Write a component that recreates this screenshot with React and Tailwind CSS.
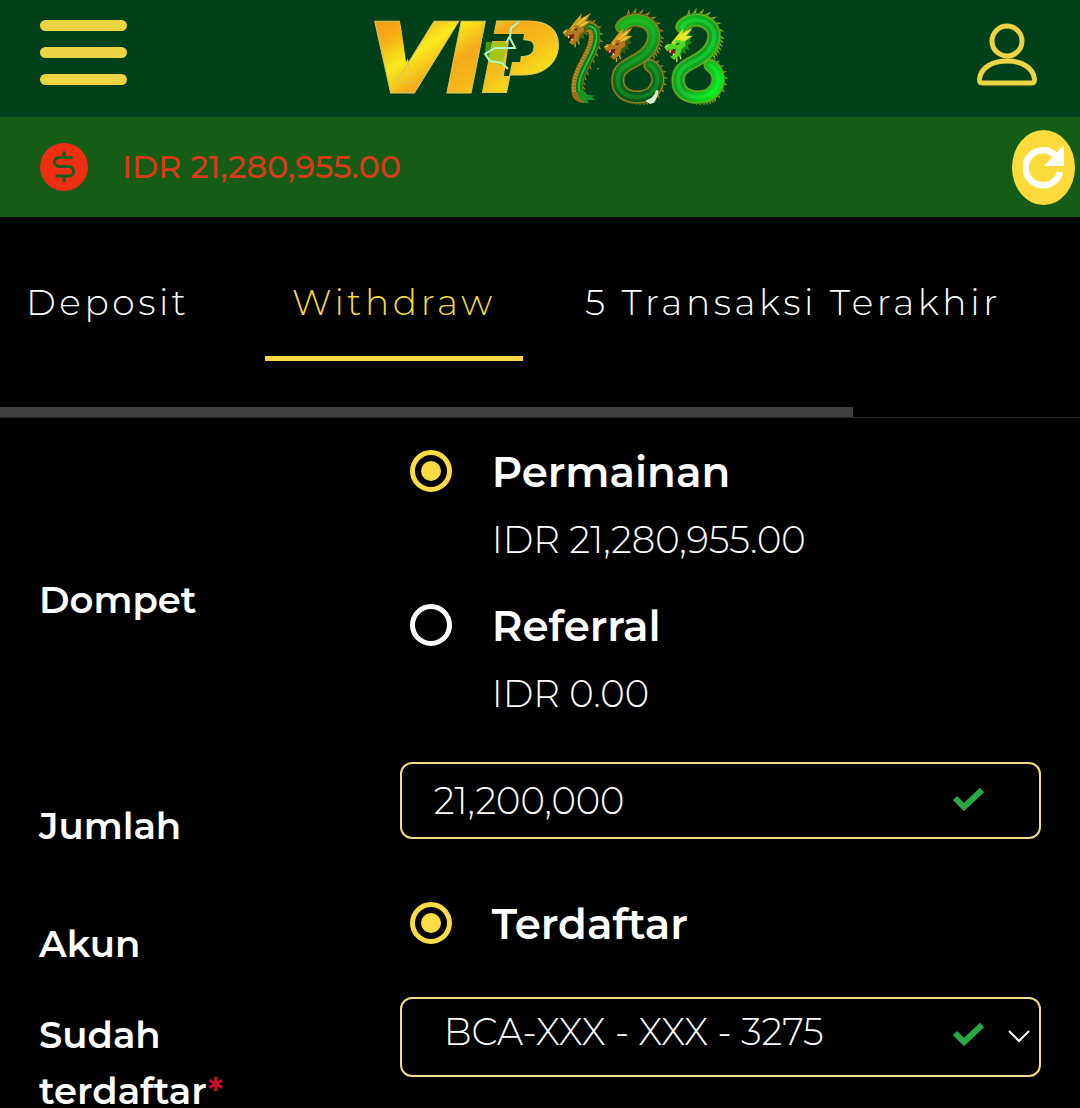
import React, { useState } from "react";

const TOP_CURVE = [
  [232, 64, 258, 46, 302, 58, 311, 100],
  [311, 100, 313, 122, 306, 140, 296, 152],
];
const BOTTOM_CURVE = [
  [262, 286, 285, 290, 298, 284, 305, 278],
  [305, 278, 335, 250, 325, 212, 300, 196],
];
const EIGHT_PATH =
  "M215 80C235 50 300 52 311 100C316 145 280 170 250 185C215 203 200 215 204 250C210 298 280 300 305 278C335 250 325 212 300 196";

const ONE_CURVE = [
  [96, 82, 142, 66, 140, 118, 120, 160],
  [120, 160, 98, 205, 72, 240, 84, 284],
];
const ONE_PATH = "M96 82C142 66 140 118 120 160C98 205 72 240 84 284";

// row of spines that follows one side of a curve, lean > 0 points them to the tail
const spines = (curve, side, reach, lean) => {
  let d = "";
  curve.forEach(([x0, y0, x1, y1, x2, y2, x3, y3]) => {
    for (let i = 0; i < 7; i++) {
      const t = (i + 0.5) / 7;
      const u = 1 - t;
      const x = u * u * u * x0 + 3 * u * u * t * x1 + 3 * u * t * t * x2 + t * t * t * x3;
      const y = u * u * u * y0 + 3 * u * u * t * y1 + 3 * u * t * t * y2 + t * t * t * y3;
      const dx = u * u * (x1 - x0) + 2 * u * t * (x2 - x1) + t * t * (x3 - x2);
      const dy = u * u * (y1 - y0) + 2 * u * t * (y2 - y1) + t * t * (y3 - y2);
      const len = Math.hypot(dx, dy) || 1;
      const tx = dx / len;
      const ty = dy / len;
      const nx = ty * side;
      const ny = -tx * side;
      d += `M${x + nx * 10 - tx * 8} ${y + ny * 10 - ty * 8}`;
      d += `L${x + nx * reach + tx * lean} ${y + ny * reach + ty * lean}`;
      d += `L${x + nx * 10 + tx * 8} ${y + ny * 10 + ty * 8}Z`;
    }
  });
  return d;
};

const DragonHead = ({ x, y, horn, face, dark }) => (
  <g transform={`translate(${x} ${y})`}>
    <path
      d="M62 -2L74 -24L70 -6L82 -30L76 -4L88 -10L76 10L84 16L70 24L76 38L62 34L66 50L54 44L50 58L42 40L20 30Z"
      fill={dark}
    />
    <path d="M20 18L40 -8L58 -28L54 -12L86 -30L66 -4L84 -4L54 18L36 26Z" fill={horn} />
    <path d="M0 30L8 20L24 20L36 8L62 10L64 26L50 36L34 34L20 38L8 42Z" fill={face} />
    <path d="M34 34L52 34L46 54L30 68L18 58L28 52Z" fill={face} />
    <path d="M10 40L34 35L32 48L22 56L24 46L14 48Z" fill="#7a1d0b" />
    <path d="M14 40L18 48L21 39ZM24 55L28 46L31 52Z" fill="#f6efc0" />
    <path d="M34 20L46 17L40 24Z" fill="#12300c" />
    <path d="M2 29L12 26M26 24L34 14M44 6L70 -16M50 12L74 -2" stroke="#f7e36a" strokeWidth="3" fill="none" />
    <path d="M38 62L37 74M46 54L50 66" stroke={horn} strokeWidth="4" />
  </g>
);

const EightDragon = ({ x, edge, body, shine, horn, face, dark }) => (
  <g transform={`translate(${x} 0)`}>
    <path d={spines(TOP_CURVE, 1, 32, 14)} fill={edge} />
    <path d={spines(BOTTOM_CURVE, -1, 30, -6)} fill={edge} />
    <g fill="none" strokeLinecap="round">
      <path d={EIGHT_PATH} stroke={dark} strokeWidth="42" />
      <path d={EIGHT_PATH} stroke={edge} strokeWidth="38" />
      <path d={EIGHT_PATH} stroke={body} strokeWidth="31" />
      <path d={EIGHT_PATH} stroke={dark} strokeWidth="31" strokeLinecap="butt" strokeDasharray="1 7" opacity="0.3" />
      <path d={EIGHT_PATH} stroke={shine} strokeWidth="11" opacity="0.3" />
    </g>
    <DragonHead x={162} y={112} horn={horn} face={face} dark={dark} />
  </g>
);

const Logo = () => (
  <svg viewBox="352 8 376 101" className="h-[101px] w-[376px] overflow-visible" role="img" aria-label="VIP188">
    <defs>
      <linearGradient id="gold" x1="0" y1="0" x2="1" y2="1">
        <stop offset="0" stopColor="#f08c14" />
        <stop offset="0.22" stopColor="#f6a915" />
        <stop offset="0.36" stopColor="#faea1c" />
        <stop offset="0.5" stopColor="#f4a81a" />
        <stop offset="0.66" stopColor="#f7c01a" />
        <stop offset="0.8" stopColor="#f8ea20" />
        <stop offset="1" stopColor="#eda417" />
      </linearGradient>
      <linearGradient id="deepBody" x1="0" y1="0" x2="0" y2="1">
        <stop offset="0" stopColor="#18b51c" />
        <stop offset="0.5" stopColor="#0f8a20" />
        <stop offset="1" stopColor="#0a5a1c" />
      </linearGradient>
      <linearGradient id="brightBody" x1="0" y1="0" x2="1" y2="1">
        <stop offset="0" stopColor="#12c322" />
        <stop offset="0.5" stopColor="#0da324" />
        <stop offset="1" stopColor="#00f51c" />
      </linearGradient>
    </defs>

    <text
      x="368"
      y="93"
      fontFamily="Montserrat, Inter, sans-serif"
      fontSize="102"
      fontWeight="900"
      fontStyle="italic"
      fill="url(#gold)"
      stroke="#d9c65a"
      strokeWidth="1"
    >
      VIP
    </text>
    {/* chiselled gaps in the letters */}
    <path d="M400 19H413L409 33H421L406 62Z" fill="#00401a" />
    <path d="M484 34H524L520 62H512L509 76H504L509 41H482Z" fill="#00401a" />
    <path d="M486 42L507 42L502 66L490 61L485 53Z" fill="#6fcf1d" opacity="0.6" />
    <path
      d="M519 22L511 28L510 38L515 48L495 48L485 54L490 61L502 63L508 69M510 36L506 43"
      fill="none"
      stroke="#b9f5c4"
      strokeWidth="2"
    />

    <g transform="translate(550 0) scale(0.3333)">
      <path d={spines(ONE_CURVE, 1, 27, 10)} fill="#a8821d" />
      <g fill="none" strokeLinecap="round">
        <path d={ONE_PATH} stroke="#3e4a12" strokeWidth="37" />
        <path d={ONE_PATH} stroke="#b98a20" strokeWidth="33" />
        <path d={ONE_PATH} stroke="#6d3c0d" strokeWidth="33" strokeLinecap="butt" strokeDasharray="2 7" opacity="0.6" />
        <path d={ONE_PATH} stroke="#0c7a1d" strokeWidth="19" transform="translate(6 0)" />
        <path d={ONE_PATH} stroke="#2fc63b" strokeWidth="5" transform="translate(6 0)" />
      </g>
      <path d="M72 284C80 312 104 308 116 310L112 300L136 300L126 292L134 286C114 288 104 280 98 268Z" fill="#15962b" />
      <path d="M66 280C72 306 92 308 106 309L88 296L82 276Z" fill="#a86a18" />
      <DragonHead x={38} y={68} horn="#dba31c" face="#b07a1a" dark="#4f6a18" />

      <EightDragon
        x={0}
        edge="#a07f1e"
        body="url(#deepBody)"
        shine="#25cf38"
        horn="#dba31c"
        face="#b8741a"
        dark="#3d5c14"
      />
      <path d="M286 302L304 294L314 282L318 270L326 272L322 290L312 308L300 312Z" fill="#d9ecd0" />
      <EightDragon
        x={181}
        edge="#7fa51c"
        body="url(#brightBody)"
        shine="#3dff4c"
        horn="#d8e81c"
        face="#4fd622"
        dark="#1f8a1c"
      />
      <circle cx="144" cy="206" r="2" fill="#d9ecd0" />
    </g>
  </svg>
);

const UserIcon = () => (
  <svg viewBox="0 0 60 64" className="h-16 w-[60px]" fill="none" stroke="#ecd443" strokeWidth="5">
    <circle cx="30" cy="18" r="15" />
    <path d="M5 60H55C57 60 57.500 58 57.500 56C56 44 44 38 30 38S4 44 2.500 56C2.500 58 3 60 5 60Z" strokeLinejoin="round" />
  </svg>
);

const DollarIcon = () => (
  <svg viewBox="0 0 48 48" className="size-12 shrink-0">
    <circle cx="24" cy="24" r="24" fill="#ee2f14" />
    <path
      d="M32.500 14.500H19.500C16.500 14.500 14.500 16.500 14.500 19S16.500 23.500 19.500 23.500H28.500C31.500 23.500 33.500 26 33.500 28.500S31.500 33 28.500 33H15.500M24 8.500V14M24 33.500V39"
      fill="none"
      stroke="#155c16"
      strokeWidth="3"
    />
  </svg>
);

const CheckIcon = () => (
  <svg viewBox="0 0 32 26" className="h-[26px] w-8" fill="none" stroke="#28a745" strokeWidth="6">
    <path d="M2 12L11 21L29 4" />
  </svg>
);

const Row = ({ label, children, className, labelClass, htmlFor }) => (
  <div className={`grid grid-cols-[9fr_16fr] items-start ${className}`}>
    <label htmlFor={htmlFor} className={`text-[37px] leading-[56px] font-semibold ${labelClass}`}>
      {label}
    </label>
    <div>{children}</div>
  </div>
);

const radioClass =
  "size-[42px] shrink-0 appearance-none rounded-full border-[5px] border-white bg-clip-content p-[6px] checked:border-[#fbdc45] checked:bg-[#fbdc45]";

const fieldClass =
  "w-full appearance-none rounded-xl border-2 border-[#efdc86] bg-black text-[37px] font-light text-white outline-none";

const App = () => {
  const [wallet, setWallet] = useState("permainan");
  const [amount, setAmount] = useState("21,200,000");

  const wallets = [
    { id: "permainan", name: "Permainan", balance: "IDR 21,280,955.00" },
    { id: "referral", name: "Referral", balance: "IDR 0.00" },
  ];

  return (
    <div className="min-h-screen overflow-hidden bg-black font-['Montserrat','Inter',sans-serif] text-white">
      <header className="flex h-[117px] items-center justify-between bg-[#00401a] px-10">
        <div className="flex flex-1">
          <button aria-label="Menu" className="mb-3 flex w-[87px] flex-col gap-4">
            <span className="h-[11px] w-full rounded-full bg-[#ecd443]" />
            <span className="h-[11px] w-full rounded-full bg-[#ecd443]" />
            <span className="h-[11px] w-full rounded-full bg-[#ecd443]" />
          </button>
        </div>
        <a href="#home" className="mx-5">
          <Logo />
        </a>
        <div className="flex flex-1 justify-end">
          <button aria-label="Profil" className="mr-[3px] mb-2">
            <UserIcon />
          </button>
        </div>
      </header>

      <div className="flex h-[100px] items-center bg-[#155c16] pr-[5px] pl-10">
        <DollarIcon />
        <span className="ml-[34px] text-[32px] leading-10 font-medium text-[#d93a1c]">IDR 21,280,955.00</span>
        <button
          aria-label="Muat ulang"
          className="ml-auto flex h-[75px] w-[63px] items-center justify-center rounded-[50%] bg-[#fedb3d]"
        >
          <svg viewBox="0 0 42 44" className="h-11 w-[42px]">
            <path d="M37 27A17.500 17.500 0 1 1 32 10" fill="none" stroke="#fff" strokeWidth="6.500" />
            <path d="M21 21L41 0V21Z" fill="#fff" />
          </svg>
        </button>
      </div>

      <nav className="flex h-[190px] items-start pt-[50px] text-[36px] leading-[70px] font-light tracking-widest whitespace-nowrap">
        <a href="#deposit" className="h-[94px] w-[217px] pl-[26px]">
          Deposit
        </a>
        <a
          href="#withdraw"
          className="ml-12 h-[94px] w-[258px] border-b-[5px] border-[#f3d748] text-center text-[#f3d748]"
        >
          Withdraw
        </a>
        <a href="#transaksi" className="ml-[62px] h-[94px]">
          5 Transaksi Terakhir
        </a>
      </nav>
      <div className="h-[11px] border-b border-[#262626]">
        <div className="h-[10px] w-[79%] bg-[#404040]" />
      </div>

      <form className="px-[39px] pt-5" onSubmit={(e) => e.preventDefault()}>
        <fieldset>
          <Row label="Dompet" className="h-[324px]" labelClass="pt-[134px]">
            {wallets.map((item) => (
              <div key={item.id} className="mb-[18px] flex items-start gap-10 pl-[10px]">
                <input
                  type="radio"
                  id={item.id}
                  name="wallet"
                  checked={wallet === item.id}
                  onChange={() => setWallet(item.id)}
                  className={`mt-3 ${radioClass}`}
                />
                <label htmlFor={item.id} className="block">
                  <span className="block text-[42px] leading-[68px] font-semibold">{item.name}</span>
                  <span className="block text-[37px] leading-[68px] font-light">{item.balance}</span>
                </label>
              </div>
            ))}
          </Row>
        </fieldset>

        <Row label="Jumlah" htmlFor="amount" className="h-32" labelClass="pt-9">
          <div className="relative">
            <input
              id="amount"
              type="text"
              value={amount}
              onChange={(e) => setAmount(e.target.value)}
              className={`h-[77px] pr-24 pl-8 ${fieldClass}`}
            />
            <span className="absolute top-6 right-14">
              <CheckIcon />
            </span>
          </div>
        </Row>

        <Row label="Akun" htmlFor="terdaftar" className="h-[107px]" labelClass="pt-[26px]">
          <div className="flex items-start gap-10 pl-[10px]">
            <input type="radio" id="terdaftar" name="account" defaultChecked className={`mt-3 ${radioClass}`} />
            <label htmlFor="terdaftar" className="text-[42px] leading-[68px] font-semibold">
              Terdaftar
            </label>
          </div>
        </Row>

        <Row
          label={
            <>
              Sudah
              <br />
              terdaftar<span className="text-[#c8102e]">*</span>
            </>
          }
          htmlFor="bank"
          labelClass="pt-[10px]"
        >
          <div className="relative">
            <select id="bank" className={`h-20 pr-28 pb-[10px] pl-[42px] ${fieldClass}`}>
              <option>BCA-XXX - XXX - 3275</option>
            </select>
            <span className="pointer-events-none absolute top-6 right-14">
              <CheckIcon />
            </span>
            <svg
              viewBox="0 0 24 16"
              className="pointer-events-none absolute top-8 right-[10px] h-4 w-6"
              fill="none"
              stroke="#fff"
              strokeWidth="2"
            >
              <path d="M2 2L12 12L22 2" />
            </svg>
          </div>
        </Row>
      </form>
    </div>
  );
};

export default App;
